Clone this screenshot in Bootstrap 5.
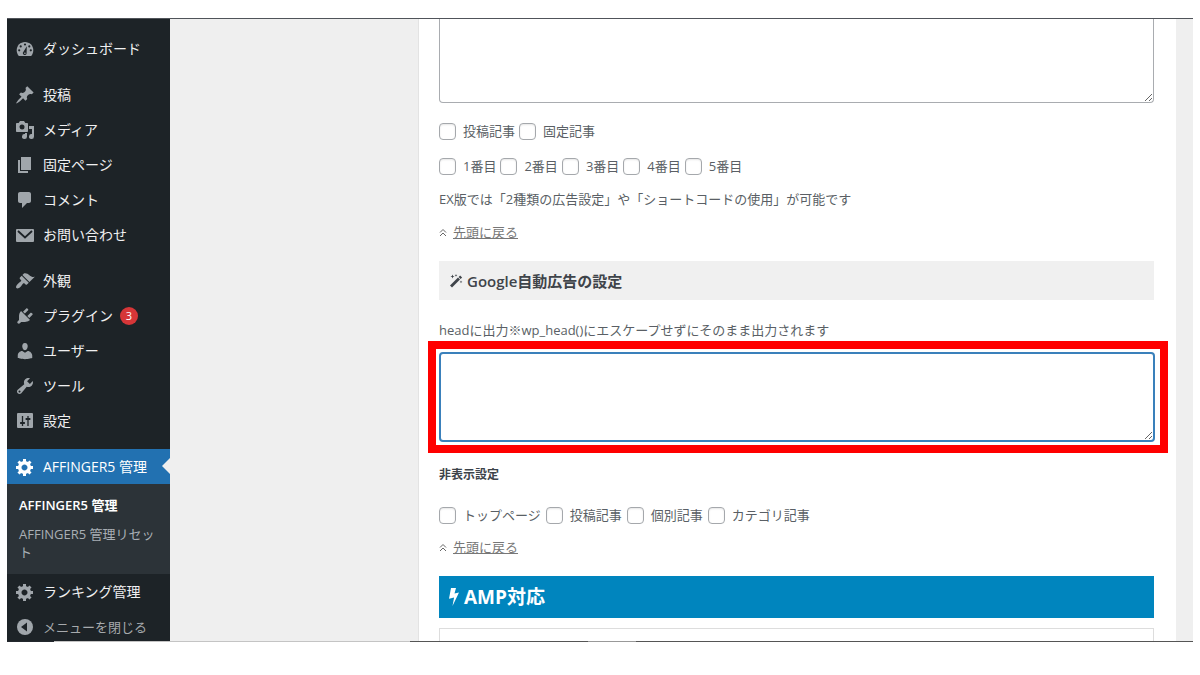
<!DOCTYPE html>
<html lang="ja">
<head>
<meta charset="utf-8">
<meta name="viewport" content="width=device-width, initial-scale=1">
<title>AFFINGER5 管理</title>
<link href="https://cdn.jsdelivr.net/npm/bootstrap@5.3.0/dist/css/bootstrap.min.css" rel="stylesheet">
<style>
body{font-family:"Open Sans","Noto Sans CJK JP",sans-serif;font-size:13px;line-height:20px;color:#5a5f65;background:#fff;overflow:hidden}
.admin-frame{height:calc(100vh - 51px);margin:18px 7px 33px;border-top:1px solid #50545a;background:#efefef;position:relative}
.frame-edge{position:absolute;left:0;right:0;bottom:0;height:1px;background:linear-gradient(90deg,#23282d 4%,#c4c4c4 4% 34%,#555 34% 49%,#999 49% 53%,#555 53%)}
.side-menu{width:163px;background:#1d2327;padding-top:12px;font-size:14px}
.side-menu .nav-link{display:flex;align-items:center;height:35px;padding:0 0 0 8px;color:#f0f0f1;white-space:nowrap;position:relative}
.side-menu svg{width:20px;height:20px;margin-right:8px;fill:#a0a6ab;flex:none}
.side-menu .current{background:#2271b1;color:#fff}
.side-menu .current svg{fill:#fff}
.side-menu .current::after{content:"";position:absolute;right:0;top:9px;border:8px solid transparent;border-left:0;border-right-color:#efefef}
.side-menu .collapse-link{color:#a7aaad;font-size:13px}
.gap-above{margin-top:11px}
.sub-menu{background:#2c3338;height:90px;padding:12px;font-size:13px;line-height:18px}
.sub-menu a{color:#a9afb5;text-decoration:none;display:block;margin-bottom:11px;word-break:break-all}
.sub-menu a.here{color:#fff;font-weight:600}
.count{width:18px;height:18px;border-radius:9px;background:#d63638;color:#fff;font-size:11px;line-height:18px;text-align:center;margin-left:7px}
.settings-panel{margin-left:248px;margin-right:17px;padding:0 22px 0 20px;border-left:1px solid #e3e3e3;background:#fff;min-width:0}
.settings-panel>*{margin-top:0;margin-bottom:13px}
.code-box{display:block;width:100%;border:1px solid #a9acb0;border-radius:4px;background:#fff;padding:4px;outline:0}
.settings-panel .code-first{height:84px;border-top:0;border-radius:0 0 4px 4px;margin-bottom:18px}
.code-focus{height:90px;border:2px solid #3a80bb}
.settings-panel .red-frame{margin:0 -14px 12px -11px;border:8px solid #f00;padding:3px 5px 3px 3px}
.check-row{display:flex;height:20px;align-items:center;gap:4px}
.settings-panel .row-places{margin-bottom:15px}
.check-row label{display:flex;align-items:center}
.check-row input{appearance:none;width:17px;height:17px;margin:0 7px 0 0;border:1px solid #a5a8ac;border-radius:4px;background:#fff;box-shadow:inset 0 1px 2px #0000001a}
.settings-panel .row-pages{gap:5px;margin-bottom:12px}
.top-link{display:flex;align-items:center;height:20px;color:#777}
.settings-panel .top-link{margin-bottom:19px}
.top-link a{color:#777}
.top-link svg{width:8px;height:9px;margin-right:6px;fill:none;stroke:#666;stroke-width:1}
.settings-panel .section-bar{background:#f0f0f0;color:#3f444a;height:39px;padding:0 10px;font-size:15px;font-weight:600;margin-bottom:20px}
.settings-panel .amp-bar{background:#0085be;color:#fff;height:42px;padding:0 9px;font-size:19px;font-weight:700;margin-bottom:10px}
.settings-panel .head-label{display:block;margin-bottom:1px}
.settings-panel .hide-title{font-size:12px;line-height:20px;font-weight:700;color:#3c434a;margin-bottom:20px}
.next-box{border:1px solid #ddd;border-bottom:0;height:24px}
</style>
</head>
<body>
<div class="admin-frame d-flex overflow-hidden">
<nav class="side-menu flex-shrink-0" aria-label="管理メニュー">
<a class="nav-link" href="#"><svg viewBox="0 0 20 20"><path fill-rule="evenodd" d="M3.8 17h12.4c1.4-1.6 2.1-3.800 2.100-6 0-4.400-3.700-8-8.300-8s-8.300 3.600-8.300 8c0 2.200.7 4.400 2.100 6z"/><g fill="#1d2327"><circle cx="10" cy="5.500" r="1.100"/><circle cx="5.700" cy="7.400" r="1.100"/><circle cx="14.300" cy="7.400" r="1.100"/><circle cx="4.200" cy="11.300" r="1.100"/><circle cx="15.800" cy="11.300" r="1.100"/><path d="M11.800 7.200l-.2 7a1.900 1.900 0 1 1-3.300-1.300z"/></g><circle cx="9.900" cy="14.300" r=".8"/></svg>ダッシュボード</a>
<a class="nav-link gap-above" href="#"><svg viewBox="0 0 20 20"><path d="M10.440 3.020l1.820-1.820 6.360 6.350-1.830 1.820c-1.050-.68-2.480-.57-3.410.36l-.75.75c-.92.93-1.040 2.350-.35 3.410l-1.830 1.820-2.410-2.410-2.800 2.790c-.42.42-3.380 2.710-3.800 2.290s1.860-3.390 2.280-3.810l2.790-2.790L4.100 9.360l1.830-1.820c1.050.69 2.480.57 3.400-.36l.75-.75c.93-.92 1.050-2.350.36-3.410z"/></svg>投稿</a>
<a class="nav-link" href="#"><svg viewBox="0 0 20 20"><path fill-rule="evenodd" d="M13 11V4c0-.55-.45-1-1-1h-1.670L9 1H5L3.670 3H2c-.55 0-1 .45-1 1v7c0 .55.45 1 1 1h10c.55 0 1-.45 1-1zM7 4.500a2.500 2.500 0 1 1 0 5 2.500 2.500 0 0 1 0-5zM14 6h5v10.500a2.500 2.500 0 1 1-2-2.450V9h-3zM10 14.050V13h2v3.500a2.500 2.500 0 1 1-2-2.450z"/></svg>メディア</a>
<a class="nav-link" href="#"><svg viewBox="0 0 20 20"><path d="M6 15V2h10v13H6zm-1 1h8v2H3V5h2v11z"/></svg>固定ページ</a>
<a class="nav-link" href="#"><svg viewBox="0 0 20 20"><path d="M5 2h9c1.100 0 2 .9 2 2v7c0 1.100-.9 2-2 2h-2l-5 5v-5H5c-1.100 0-2-.9-2-2V4c0-1.100.9-2 2-2z"/></svg>コメント</a>
<a class="nav-link" href="#"><svg viewBox="0 0 20 20"><rect x="1" y="4" width="18" height="13" rx="1"/><path d="M3 6l7 6.500L17 6" fill="none" stroke="#1d2327" stroke-width="1.800"/></svg>お問い合わせ</a>
<a class="nav-link gap-above" href="#"><svg viewBox="0 0 20 20"><path d="M14.480 11.060L7.410 3.990l1.500-1.500c.5-.56 2.300-.47 3.510.32 1.210.8 1.430 1.280 2.910 2.100 1.180.64 2.450 1.260 4.450.85zm-.71.71L6.700 4.700 4.930 6.470c-.39.39-.39 1.020 0 1.410l1.060 1.060c.39.39.39 1.030 0 1.420-.6.600-1.430 1.110-2.210 1.690-.35.26-.7.53-1.010.84C1.430 14.230.4 16.080 1.400 17.070c.99 1 2.840-.03 4.180-1.360.31-.31.58-.66.85-1.020.57-.78 1.080-1.610 1.690-2.210.39-.39 1.020-.39 1.410 0l1.060 1.060c.39.39 1.020.39 1.410 0z"/></svg>外観</a>
<a class="nav-link" href="#"><svg viewBox="0 0 20 20"><path d="M13.110 4.360L9.870 7.600 8 5.730l3.240-3.240c.35-.34 1.050-.2 1.560.32.52.51.66 1.210.31 1.550zm-8 1.770l.91-1.120 9.010 9.010-1.190.84c-.71.71-2.630 1.160-3.820 1.160H6.140L4.900 17.260c-.59.59-1.540.59-2.120 0-.59-.58-.59-1.530 0-2.120l1.240-1.240v-3.880c0-1.130.4-3.190 1.090-3.890zm7.260 3.970l3.240-3.240c.34-.35 1.040-.21 1.550.31.52.51.66 1.210.31 1.550l-3.240 3.250z"/></svg>プラグイン<span class="count">3</span></a>
<a class="nav-link" href="#"><svg viewBox="0 0 20 20"><path d="M10 9.250c-2.270 0-2.730-3.440-2.730-3.440C7 4.020 7.820 2 9.970 2c2.160 0 2.980 2.020 2.710 3.810 0 0-.41 3.440-2.680 3.440zm0 2.570L12.720 10c2.390 0 4.520 2.330 4.520 4.530v2.490s-3.650 1.130-7.240 1.130c-3.650 0-7.240-1.130-7.240-1.130v-2.490c0-2.250 1.940-4.480 4.470-4.480z"/></svg>ユーザー</a>
<a class="nav-link" href="#"><svg viewBox="0 0 20 20"><path fill-rule="evenodd" d="M16.680 9.770c-1.340 1.340-3.300 1.670-4.950.99l-5.410 6.520c-.99.99-2.590.99-3.580 0s-.99-2.590 0-3.570l6.520-5.420c-.68-1.650-.35-3.610.99-4.950 1.280-1.280 3.120-1.620 4.720-1.060l-2.890 2.890 2.820 2.820 2.860-2.870c.53 1.580.18 3.390-1.080 4.650zM3.810 16.210a1 1 0 1 0 1.430-1.430 1 1 0 0 0-1.430 1.430z"/></svg>ツール</a>
<a class="nav-link" href="#"><svg viewBox="0 0 20 20"><rect x="2" y="2" width="16" height="15" rx="1"/><path d="M7.500 5v10M5 12h5M13 5v10M10.500 8h5" fill="none" stroke="#1d2327" stroke-width="1.300"/><path d="M5.500 11h4v2h-4zM11 7h4v2h-4z" fill="#1d2327"/></svg>設定</a>
<a class="nav-link gap-above current" href="#"><svg viewBox="0 0 20 20"><path fill-rule="evenodd" d="M18 12h-2.180c-.17.7-.44 1.350-.81 1.930l1.540 1.540-2.100 2.100-1.540-1.540c-.58.36-1.230.63-1.910.79V19H8v-2.180c-.68-.16-1.330-.43-1.910-.79l-1.540 1.540-2.120-2.120 1.540-1.540c-.36-.58-.63-1.230-.79-1.910H1V9.030h2.170c.16-.7.44-1.350.8-1.940L2.430 5.550l2.100-2.100 1.540 1.540c.58-.37 1.240-.64 1.930-.81V2h3v2.180c.68.16 1.330.43 1.910.79l1.540-1.540 2.120 2.120-1.540 1.540c.36.59.64 1.240.8 1.940H18V12zm-8.500 1.500c1.660 0 3-1.340 3-3s-1.340-3-3-3-3 1.340-3 3 1.340 3 3 3z"/></svg>AFFINGER5 管理</a>
<div class="sub-menu"><a class="here" href="#">AFFINGER5 管理</a><a href="#">AFFINGER5 管理リセット</a></div>
<a class="nav-link" href="#"><svg viewBox="0 0 20 20"><path fill-rule="evenodd" d="M18 12h-2.180c-.17.7-.44 1.350-.81 1.930l1.540 1.540-2.100 2.100-1.540-1.540c-.58.36-1.230.63-1.910.79V19H8v-2.180c-.68-.16-1.330-.43-1.910-.79l-1.540 1.540-2.120-2.120 1.540-1.540c-.36-.58-.63-1.230-.79-1.910H1V9.030h2.170c.16-.7.44-1.350.8-1.940L2.430 5.550l2.100-2.100 1.540 1.540c.58-.37 1.240-.64 1.930-.81V2h3v2.180c.68.16 1.330.43 1.910.79l1.540-1.540 2.120 2.120-1.540 1.540c.36.59.64 1.240.8 1.940H18V12zm-8.500 1.500c1.660 0 3-1.340 3-3s-1.340-3-3-3-3 1.340-3 3 1.340 3 3 3z"/></svg>ランキング管理</a>
<a class="nav-link collapse-link" href="#"><svg viewBox="0 0 20 20"><circle cx="10" cy="10" r="8"/><path d="M12 5.500v9L6 10z" fill="#1d2327"/></svg>メニューを閉じる</a>
</nav>
<main class="settings-panel flex-grow-1">
<textarea class="code-box code-first" aria-label="広告コード"></textarea>
<div class="check-row row-places"><label><input type="checkbox">投稿記事</label><label><input type="checkbox">固定記事</label></div>
<div class="check-row"><label><input type="checkbox">1番目</label><label><input type="checkbox">2番目</label><label><input type="checkbox">3番目</label><label><input type="checkbox">4番目</label><label><input type="checkbox">5番目</label></div>
<p>EX版では「2種類の広告設定」や「ショートコードの使用」が可能です</p>
<div class="top-link"><svg viewBox="0 0 8 9"><path d="M1 4.500l3-3 3 3M1 8l3-3 3 3"/></svg><a href="#">先頭に戻る</a></div>
<h2 class="section-bar d-flex align-items-center"><svg width="14" height="14" viewBox="0 0 14 14" class="me-1" fill="#3f444a"><path d="M1 11.600l8-8 2 2-8 8zM9.600 3l1.500-1.500 2 2L11.600 5zM3.500.5l.6 1.400 1.400.6-1.400.6-.6 1.400-.6-1.400-1.400-.6 1.400-.6zM7 0l.4 1 1 .4-1 .4L7 2.800l-.4-1-1-.4 1-.4zM12 6.500l.4 1 1 .4-1 .4-.4 1-.4-1-1-.4 1-.4z"/></svg>Google自動広告の設定</h2>
<label for="head-code" class="head-label">headに出力※wp_head()にエスケープせずにそのまま出力されます</label>
<div class="red-frame"><textarea id="head-code" class="code-box code-focus"></textarea></div>
<h3 class="hide-title">非表示設定</h3>
<div class="check-row row-pages"><label><input type="checkbox">トップページ</label><label><input type="checkbox">投稿記事</label><label><input type="checkbox">個別記事</label><label><input type="checkbox">カテゴリ記事</label></div>
<div class="top-link"><svg viewBox="0 0 8 9"><path d="M1 4.500l3-3 3 3M1 8l3-3 3 3"/></svg><a href="#">先頭に戻る</a></div>
<h2 class="amp-bar d-flex align-items-center"><svg width="12" height="20" viewBox="0 0 12 20" class="me-1" fill="#fff"><path d="M3 1h5L6.500 6.500l4.500-1L4.500 19l1.600-8.500L1 11.700z"/></svg>AMP対応</h2>
<div class="next-box"></div>
</main>
<div class="frame-edge"></div>
</div>
<script src="https://cdn.jsdelivr.net/npm/bootstrap@5.3.0/dist/js/bootstrap.bundle.min.js"></script>
</body>
</html>
